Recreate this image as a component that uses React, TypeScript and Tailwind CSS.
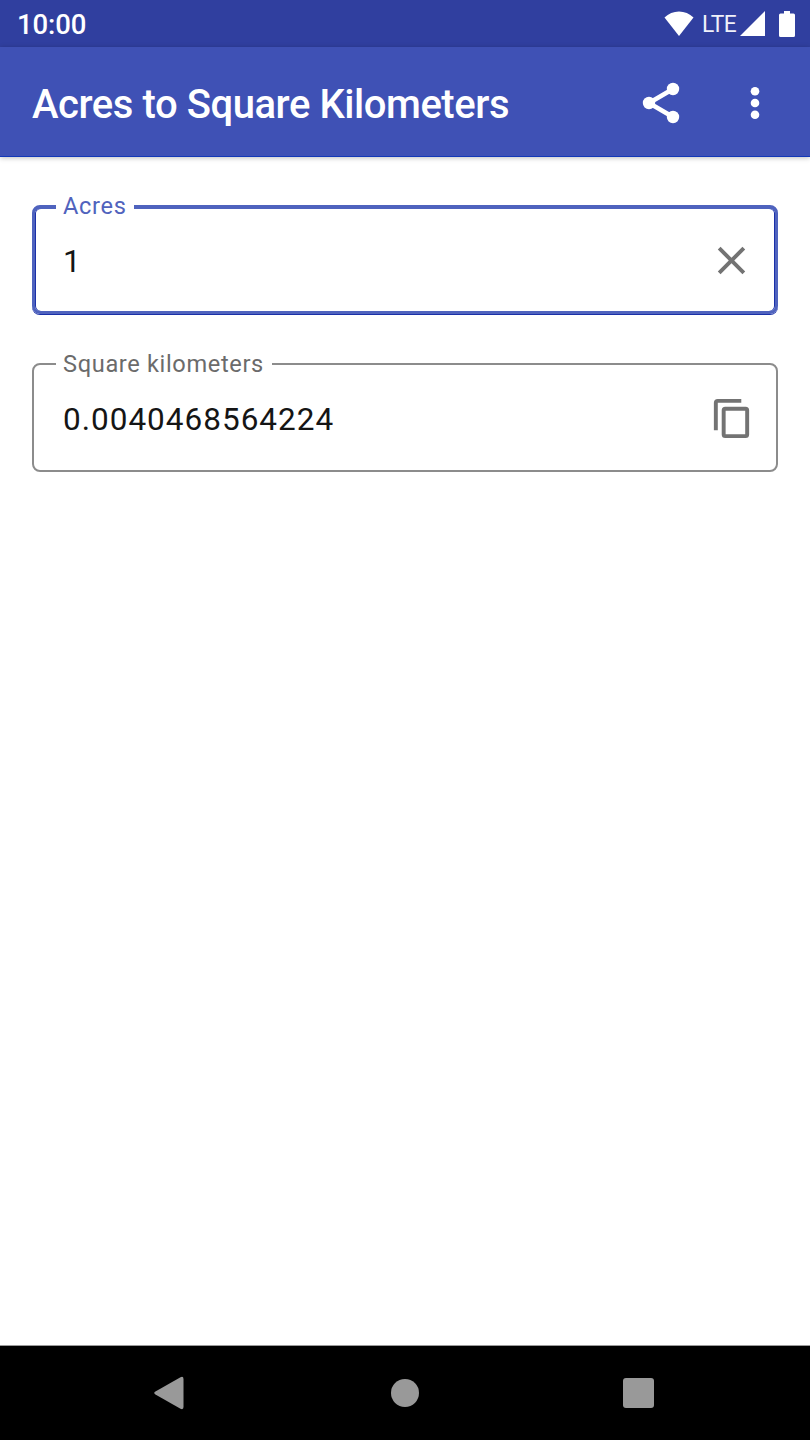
import { useState } from 'react'
import type { ReactNode } from 'react'

const SQ_KM_PER_ACRE = 0.0040468564224

function StatusBar() {
  return (
    <div className="flex h-[47px] items-center bg-[#303f9f] pl-[17px] pr-[15px] text-white">
      <span className="flex-1 pt-[3px] text-[27.5px] font-medium leading-8 tracking-[-0.1px]">10:00</span>
      <svg className="h-[25px] w-[30px]" viewBox="0 0 30 25" fill="currentColor">
        <path d="M15 25 0.5 6.5C4.5 2.5 9.5 0.5 15 0.5s10.500 2 14.500 6z" />
      </svg>
      <span className="ml-[8px] w-[36px] origin-left scale-x-[0.93] whitespace-nowrap text-[24.5px] leading-8 tracking-[-0.6px] text-[#f0f1fa]">
        LTE
      </span>
      <svg className="ml-[2px] h-[25px] w-[25px]" viewBox="0 0 25 25" fill="currentColor">
        <path d="M25 0v25H0z" />
      </svg>
      <svg className="ml-[14px] h-[26px] w-[16px]" viewBox="0 0 16 26" fill="currentColor">
        <path d="M5 0h6v2.500h3.500Q16 2.500 16 4v20.500Q16 26 14.500 26h-13Q0 26 0 24.500V4Q0 2.500 1.500 2.500H5z" />
      </svg>
    </div>
  )
}

function AppBar() {
  return (
    <header className="flex h-[110px] items-center border-b border-[#1238b8] bg-[#3f51b5] pl-8 pr-[31px] pt-[3px] text-white shadow-[0_1px_5px_rgba(0,0,0,0.25)]">
      <h1 className="flex-1 whitespace-nowrap pt-[3px] text-[40px] font-medium leading-[48px] tracking-[-0.44px]">
        Acres to Square Kilometers
      </h1>
      <button aria-label="Share">
        <svg className="h-[48px] w-[48px]" viewBox="0 0 24 24" fill="currentColor">
          <path d="M18 5 6 12l12 7" fill="none" stroke="currentColor" strokeWidth="2.3" />
          <circle cx="18" cy="5" r="3.1" />
          <circle cx="6" cy="12" r="3.1" />
          <circle cx="18" cy="19" r="3.1" />
        </svg>
      </button>
      <button aria-label="More options" className="ml-[46px]">
        <svg className="h-[48px] w-[48px]" viewBox="0 0 24 24" fill="currentColor">
          <circle cx="12" cy="6.1" r="2.15" />
          <circle cx="12" cy="12" r="2.15" />
          <circle cx="12" cy="17.9" r="2.15" />
        </svg>
      </button>
    </header>
  )
}

type FieldProps = {
  label: string
  active?: boolean
  children: ReactNode
}

function Field({ label, active, children }: FieldProps) {
  return (
    <fieldset
      className={
        active
          ? 'mb-px h-[119px] rounded-[8px] border-x-[3px] border-t-4 border-b-[3px] border-[#4f63be] pl-[21px] pr-5 shadow-[0_1px_0_#1a30a8,inset_1px_0_0_#1a30a8,inset_-1px_0_0_#1a30a8]'
          : 'h-[120px] rounded-[8px] border-2 border-[#8c8c8c] pl-[22px] pr-[21px]'
      }
    >
      <legend
        className={
          active
            ? 'h-6 pl-[7px] pr-2 text-[23.6px] leading-[22px] tracking-[0.65px] text-[#5163bd]'
            : 'h-6 pl-[7px] pr-2 text-[23.6px] leading-6 tracking-[0.65px] text-[#6b6b6b]'
        }
      >
        {label}
      </legend>
      <div className="flex h-[84px] items-center pl-[7px]">{children}</div>
    </fieldset>
  )
}

export default function App() {
  const [acres, setAcres] = useState('1')
  const result = acres === '' ? '' : String(Number(acres) * SQ_KM_PER_ACRE)

  return (
    <div className="flex h-[1440px] w-[810px] flex-col bg-white font-['Roboto',sans-serif]">
      <StatusBar />
      <AppBar />

      <main className="flex flex-1 flex-col gap-[37px] px-8 pt-[38px]">
        <Field label="Acres" active>
          <input
            aria-label="Acres"
            className="min-w-0 flex-1 pt-[2px] text-[31.500px] leading-10 tracking-[1px] text-[#151515] outline-none"
            value={acres}
            onChange={e => setAcres(e.target.value)}
          />
          <button aria-label="Clear" className="mb-[2px] text-[#737373]" onClick={() => setAcres('')}>
            <svg className="h-[47px] w-[47px]" viewBox="0 0 24 24" fill="currentColor">
              <path d="M19 6.410L17.590 5 12 10.590 6.410 5 5 6.410 10.590 12 5 17.590 6.410 19 12 13.410 17.590 19 19 17.590 13.410 12z" />
            </svg>
          </button>
        </Field>

        <Field label="Square kilometers">
          <span className="flex-1 pt-[3px] text-[31.500px] leading-10 tracking-[1px] text-[#151515]">{result}</span>
          <button aria-label="Copy" className="text-[#737373]" onClick={() => navigator.clipboard.writeText(result)}>
            <svg className="h-[47px] w-[47px]" viewBox="0 0 24 24" fill="none" stroke="currentColor" strokeWidth="2">
              <path d="M4 18V4q0-1 1-1h12" />
              <rect x="8" y="7" width="12" height="14" rx="0.8" />
            </svg>
          </button>
        </Field>
      </main>

      <nav className="flex h-[95px] items-center border-t border-[#9a9a9a] bg-black pl-[154px] pr-[156px] text-[#999999]">
        <button aria-label="Back">
          <svg className="h-[34px] w-[30px]" viewBox="0 0 30 34" fill="currentColor">
            <path d="M1 15.800 26.500 1.200Q29.500 0 29.500 3v28q0 3-3 1.800L1 18.200Q-0.500 17 1 15.800z" />
          </svg>
        </button>
        <button aria-label="Home" className="ml-[207px] h-[28px] w-[28px] rounded-full bg-[#999999]" />
        <button aria-label="Recents" className="ml-auto h-[30px] w-[31px] rounded-[3px] bg-[#999999]" />
      </nav>
    </div>
  )
}
